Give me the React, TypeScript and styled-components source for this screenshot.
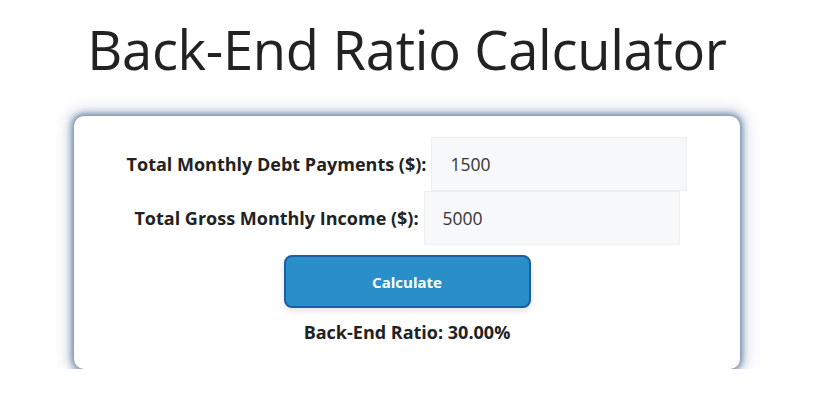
import React, { useState } from "react";
import styled, { createGlobalStyle } from "styled-components";

const GlobalStyle = createGlobalStyle`
  html, body { margin: 0; padding: 0; background: #ffffff; }
  body { font-family: "Open Sans", "Noto Sans", sans-serif; color: #222; }
`;

const Page = styled.div`
  width: 814px;
  display: flex;
  flex-direction: column;
  align-items: center;
`;

const Title = styled.h1`
  margin: 14px 0 0 0;
  font-family: "Open Sans", sans-serif;
  font-weight: 400;
  font-size: 54.3px;
  line-height: 70px;
  color: #222;
  letter-spacing: -0.3px;
`;

const Card = styled.div`
  margin-top: 32px;
  width: 666px;
  box-sizing: border-box;
  background: #fff;
  border-radius: 10px;
  box-shadow: 0 0 6px 2px rgba(80, 110, 150, 0.8), 0 0 16px 5px rgba(120, 145, 180, 0.4);
  padding: 21px 0 24px 0;
  display: flex;
  flex-direction: column;
  align-items: center;
`;

const Row = styled.div`
  display: flex;
  align-items: center;
  justify-content: center;
  gap: 5px;
`;

const Label = styled.label`
  font-family: "Open Sans", sans-serif;
  font-weight: 700;
  font-size: 18px;
  color: #222;
`;

const Input = styled.input`
  width: 256px;
  height: 54px;
  box-sizing: border-box;
  background: #f7f8fa;
  border: 1px solid #eceef0;
  padding: 0 18px;
  font-family: "Open Sans", sans-serif;
  font-size: 17.5px;
  color: #333;
  outline: none;
`;

const Button = styled.button`
  margin-top: 10px;
  width: 247px;
  height: 53px;
  background: #2a8fc8;
  border: 2px solid #1a5ea3;
  border-radius: 8px;
  color: #fff;
  font-family: "Open Sans", sans-serif;
  font-weight: 700;
  font-size: 15px;
  box-shadow: 0 3px 6px rgba(0, 0, 0, 0.12);
  cursor: pointer;
`;

const Result = styled.div`
  margin-top: 11px;
  font-family: "Open Sans", sans-serif;
  font-weight: 700;
  font-size: 18px;
  line-height: 26px;
  color: #222;
`;

export default function App() {
  const [debt, setDebt] = useState("1500");
  const [income, setIncome] = useState("5000");
  const [ratio, setRatio] = useState("30.00");
  const calc = () => {
    const d = parseFloat(debt);
    const i = parseFloat(income);
    if (i > 0) setRatio(((d / i) * 100).toFixed(2));
  };
  return (
    <Page>
      <GlobalStyle />
      <Title>Back-End Ratio Calculator</Title>
      <Card>
        <Row>
          <Label>Total Monthly Debt Payments ($):</Label>
          <Input value={debt} onChange={(e) => setDebt(e.target.value)} />
        </Row>
        <Row>
          <Label>Total Gross Monthly Income ($):</Label>
          <Input value={income} onChange={(e) => setIncome(e.target.value)} />
        </Row>
        <Button onClick={calc}>Calculate</Button>
        <Result>Back-End Ratio: {ratio}%</Result>
      </Card>
    </Page>
  );
}
